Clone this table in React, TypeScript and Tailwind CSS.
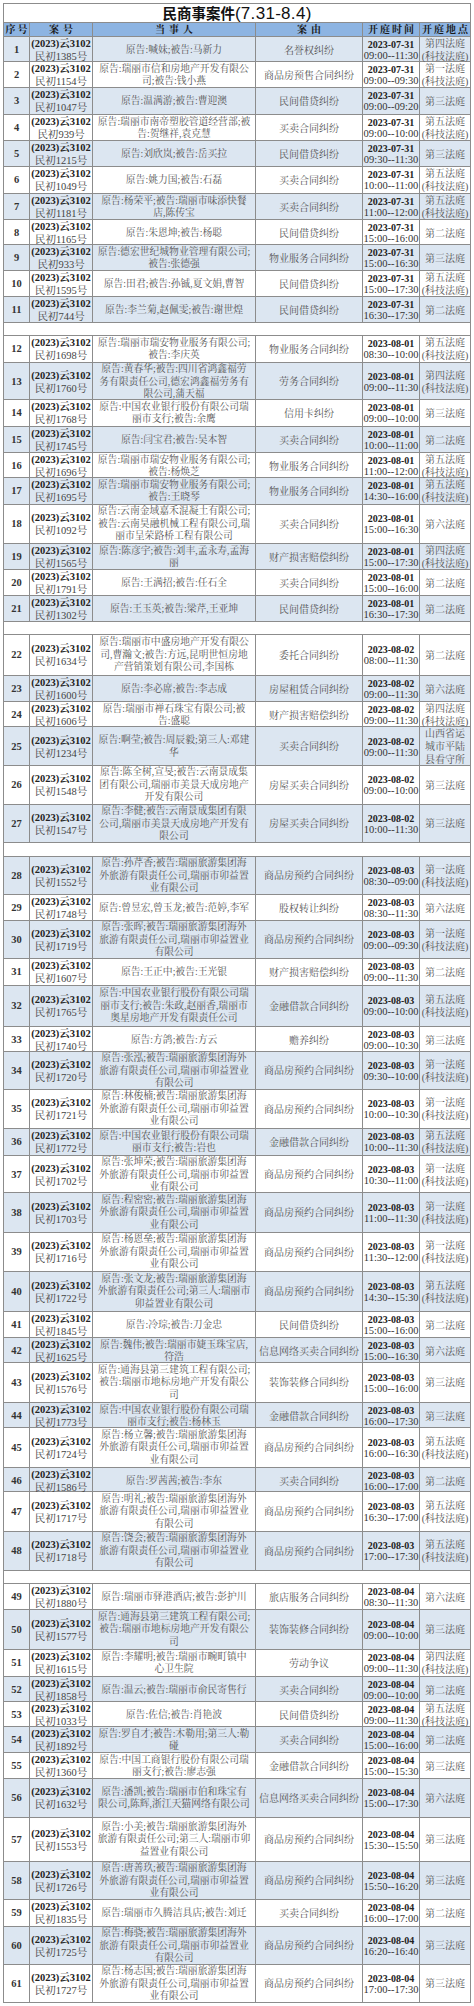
import React from "react";

type R = [number, string, string, string, string, string, number];

const P1K = "第一法庭~(科技法庭)";
const P4K = "第四法庭~(科技法庭)";
const P5K = "第五法庭~(科技法庭)";
const F1 = "原告:";
const LY = "被告:瑞丽旅游集团海";
const LY2 = "外旅游有限责任公司,瑞丽市卯益置~业有限公司";
const LZ = "被告:瑞丽旅游集团海外~旅游有限责任公司,瑞丽市卯益置业~有限公司";
const YP = "商品房预约合同纠纷";

const ROWH: Record<number, string> = {
  13: "h-[13px]",
  14: "h-[14px]",
  24: "h-[24px]",
  25: "h-[25px]",
  26: "h-[26px]",
  27: "h-[27px]",
  37: "h-[37px]",
  38: "h-[38px]",
  39: "h-[39px]",
  40: "h-[40px]",
  41: "h-[41px]",
  44: "h-[44px]",
};

const groups: { date: string; rows: R[]; sep: number }[] = [
  {
    date: "2023-07-31",
    sep: 13,
    rows: [
      [1, "1385", "原告:喊妹;被告:马新力", "名誉权纠纷", "09:00--11:30", P4K, 25],
      [2, "1154", "原告:瑞丽市信和房地产开发有限公~司;被告:钱小燕", "商品房预售合同纠纷", "09:00--09:30", P1K, 26],
      [3, "1047", "原告:温满游;被告:曹迎澳", "民间借贷纠纷", "09:00--09:20", "第三法庭", 27],
      [4, "939", "原告:瑞丽市南帝塑胶管道经营部;被~告:贺继祥,袁克慧", "买卖合同纠纷", "09:00--10:00", P5K, 26],
      [5, "1215", "原告:刘欣岚;被告:岳买拉", "民间借贷纠纷", "09:30--11:30", "第三法庭", 26],
      [6, "1049", "原告:姚力国;被告:石磊", "买卖合同纠纷", "10:00--11:00", P5K, 27],
      [7, "1181", "原告:杨荣平;被告:瑞丽市味添快餐~店,陈传宝", "买卖合同纠纷", "11:00--12:00", P5K, 26],
      [8, "1165", "原告:朱恩坤;被告:杨聪", "民间借贷纠纷", "15:00--16:00", "第二法庭", 25],
      [9, "933", "原告:德宏世纪城物业管理有限公司;~被告:张德强", "物业服务合同纠纷", "15:00--16:30", "第三法庭", 26],
      [10, "1595", "原告:田君;被告:孙铖,夏文娟,曹智", "民间借贷纠纷", "15:00--17:30", P5K, 26],
      [11, "744", "原告:李兰菊,赵佩雯;被告:谢世煌", "民间借贷纠纷", "16:30--17:30", "第二法庭", 26],
    ],
  },
  {
    date: "2023-08-01",
    sep: 13,
    rows: [
      [12, "1698", "原告:瑞丽市瑞安物业服务有限公司;~被告:李庆英", "物业服务合同纠纷", "08:30--10:00", P5K, 27],
      [13, "1760", "原告:黄春华;被告:四川省鸿鑫福劳~务有限责任公司,德宏鸿鑫福劳务有~限公司,蒲天福", "劳务合同纠纷", "09:00--11:30", P4K, 37],
      [14, "1768", "原告:中国农业银行股份有限公司瑞~丽市支行;被告:余鹰", "信用卡纠纷", "09:00--10:00", "第三法庭", 27],
      [15, "1745", "原告:闫宝君;被告:吴本智", "买卖合同纠纷", "10:00--11:00", "第二法庭", 26],
      [16, "1696", "原告:瑞丽市瑞安物业服务有限公司;~被告:杨焕芝", "物业服务合同纠纷", "11:00--12:00", P5K, 25],
      [17, "1695", "原告:瑞丽市瑞安物业服务有限公司;~被告:王晓琴", "物业服务合同纠纷", "14:30--16:00", P5K, 27],
      [18, "1092", "原告:云南金域嘉禾混凝土有限公司;~被告:云南昊融机械工程有限公司,瑞~丽市呈荣路桥工程有限公司", "买卖合同纠纷", "15:00--16:30", "第六法庭", 39],
      [19, "1565", "原告:陈彦宇;被告:刘丰,孟永寿,孟海~丽", "财产损害赔偿纠纷", "15:00--17:30", P4K, 26],
      [20, "1791", "原告:王满招;被告:任石全", "买卖合同纠纷", "15:00--16:00", "第二法庭", 26],
      [21, "1302", "原告:王玉英;被告:梁芹,王亚坤", "民间借贷纠纷", "16:30--17:30", "第二法庭", 26],
    ],
  },
  {
    date: "2023-08-02",
    sep: 14,
    rows: [
      [22, "1634", "原告:瑞丽市中盛房地产开发有限公~司,曹瀚文;被告:方远,昆明世恒房地~产营销策划有限公司,李国栋", "委托合同纠纷", "08:00--11:30", "第二法庭", 41],
      [23, "1600", "原告:李必席;被告:李志成", "房屋租赁合同纠纷", "09:00--11:30", "第六法庭", 26],
      [24, "1606", "原告:瑞丽市禅石珠宝有限公司;被~告:盛聪", "财产损害赔偿纠纷", "09:00--11:30", P4K, 25],
      [25, "1234", "原告:啊莹;被告:周辰毅;第三人:邓建~华", "买卖合同纠纷", "09:00--11:30", "山西省运~城市平陆~县看守所", 39],
      [26, "1548", "原告:陈全树,宣旻;被告:云南景成集~团有限公司,瑞丽市美景天成房地产~开发有限公司", "房屋买卖合同纠纷", "09:00--10:00", "第三法庭", 39],
      [27, "1547", "原告:李健;被告:云南景成集团有限~公司,瑞丽市美景天成房地产开发有~限公司", "房屋买卖合同纠纷", "10:00--11:30", "第三法庭", 38],
    ],
  },
  {
    date: "2023-08-03",
    sep: 13,
    rows: [
      [28, "1552", F1 + "孙芹香;" + LY + "~" + LY2, YP, "08:30--09:00", P1K, 38],
      [29, "1748", "原告:曾昱宏,曾玉龙;被告:范婷,李军", "股权转让纠纷", "08:30--11:30", "第六法庭", 26],
      [30, "1719", F1 + "张晖;" + LZ, YP, "09:00--09:30", P1K, 38],
      [31, "1607", "原告:王正中;被告:王光银", "财产损害赔偿纠纷", "09:00--11:30", "第二法庭", 27],
      [32, "1765", "原告:中国农业银行股份有限公司瑞~丽市支行;被告:朱政,赵丽香,瑞丽市~奥星房地产开发有限责任公司", "金融借款合同纠纷", "09:00--10:00", P5K, 41],
      [33, "1740", "原告:方鸽;被告:方云", "赡养纠纷", "09:00--10:30", "第三法庭", 25],
      [34, "1720", F1 + "张泓;" + LZ, YP, "09:30--10:00", P1K, 38],
      [35, "1721", F1 + "林俊楠;" + LY + "~" + LY2, YP, "10:00--10:30", P1K, 39],
      [36, "1772", "原告:中国农业银行股份有限公司瑞~丽市支行;被告:岩也", "金融借款合同纠纷", "10:00--11:30", P5K, 27],
      [37, "1702", F1 + "张坤荣;" + LY + "~" + LY2, YP, "10:30--11:00", P1K, 37],
      [38, "1703", F1 + "程密密;" + LY + "~" + LY2, YP, "11:00--11:30", P1K, 40],
      [39, "1716", F1 + "杨恩垒;" + LY + "~" + LY2, YP, "11:30--12:00", P1K, 39],
      [40, "1722", "原告:张文龙;被告:瑞丽旅游集团海~外旅游有限责任公司;第三人:瑞丽市~卯益置业有限公司", YP, "14:30--15:30", P5K, 40],
      [41, "1845", "原告:冷琮;被告:刀金忠", "民间借贷纠纷", "15:00--16:00", "第二法庭", 26],
      [42, "1625", "原告:魏伟;被告:瑞丽市婕玉珠宝店,~符浩", "信息网络买卖合同纠纷", "15:00--16:30", "第六法庭", 25],
      [43, "1576", "原告:通海县第三建筑工程有限公司;~被告:瑞丽市地标房地产开发有限公~司", "装饰装修合同纠纷", "15:00--16:00", "第三法庭", 40],
      [44, "1773", "原告:中国农业银行股份有限公司瑞~丽市支行;被告:杨林玉", "金融借款合同纠纷", "16:00--17:30", "第三法庭", 25],
      [45, "1724", F1 + "杨立馨;" + LY + "~" + LY2, YP, "16:00--16:30", P5K, 40],
      [46, "1586", "原告:罗茜茜;被告:李东", "买卖合同纠纷", "16:00--17:00", "第二法庭", 24],
      [47, "1717", F1 + "明礼;" + LZ, YP, "16:30--17:00", P5K, 40],
      [48, "1718", F1 + "饶会;" + LZ, YP, "17:00--17:30", P5K, 39],
    ],
  },
  {
    date: "2023-08-04",
    sep: 0,
    rows: [
      [49, "1880", "原告:瑞丽市驿港酒店;被告:彭护川", "旅店服务合同纠纷", "08:30--11:30", "第六法庭", 26],
      [50, "1577", "原告:通海县第三建筑工程有限公司;~被告:瑞丽市地标房地产开发有限公~司", "装饰装修合同纠纷", "09:00--10:00", "第三法庭", 40],
      [51, "1615", "原告:李耀明;被告:瑞丽市畹町镇中~心卫生院", "劳动争议", "09:00--11:30", P4K, 27],
      [52, "1858", "原告:温云;被告:瑞丽市俞民寄售行", "买卖合同纠纷", "09:00--10:00", "第二法庭", 25],
      [53, "1033", "原告:佐信;被告:肖艳波", "民间借贷纠纷", "09:00--11:30", P5K, 25],
      [54, "1892", "原告:罗自才;被告:木勒用;第三人:勒~碰", "买卖合同纠纷", "15:00--16:00", "第二法庭", 26],
      [55, "1360", "原告:中国工商银行股份有限公司瑞~丽支行;被告:廖志强", "金融借款合同纠纷", "15:00--15:30", "第三法庭", 26],
      [56, "1632", "原告:潘凯;被告:瑞丽市伯和珠宝有~限公司,陈辉,浙江天猫网络有限公司", "信息网络买卖合同纠纷", "15:00--17:30", "第六法庭", 39],
      [57, "1553", "原告:小美;被告:瑞丽旅游集团海外~旅游有限责任公司;第三人:瑞丽市卯~益置业有限公司", YP, "15:30--15:50", "第三法庭", 44],
      [58, "1726", F1 + "唐善玖;" + LY + "~" + LY2, YP, "15:50--16:20", "第三法庭", 38],
      [59, "1835", "原告:瑞丽市久腾洁具店;被告:刘迁", "买卖合同纠纷", "16:00--17:00", "第二法庭", 27],
      [60, "1725", F1 + "梅骁;" + LZ, YP, "16:20--16:40", "第三法庭", 38],
      [61, "1727", F1 + "杨志国;" + LY + "~" + LY2, YP, "17:00--17:30", "第三法庭", 38],
    ],
  },
];

const GRID = "grid grid-cols-[26px_63px_163px_107px_57px_50px]";
const CELL = "flex flex-col items-center justify-center text-center border-r border-[#8c8c8c] overflow-visible";

function Row({ r, date }: { r: R; date: string }) {
  const [seq, num, parties, cause, time, place, h] = r;
  const blue = seq <= 27 ? seq % 2 === 1 : seq % 2 === 0;
  return (
    <div className={`${GRID} ${ROWH[h]} border-b border-[#8c8c8c] ${blue ? "bg-[#dce6f1]" : "bg-white"}`}>
      <div className={`${CELL} text-[10.5px] font-bold text-[#333]`}>{seq}</div>
      <div className={`${CELL} leading-[13px] text-[10.5px] whitespace-nowrap`}>
        <span className="font-bold text-[#222]">(2023)云3102</span>
        <span className="text-[#444]">民初{num}号</span>
      </div>
      <div className={`${CELL} leading-[12.5px] text-[9.8px] text-[#555] whitespace-nowrap`}>
        {parties.split("~").map((l, i) => (
          <span key={i}>{l}</span>
        ))}
      </div>
      <div className={`${CELL} text-[10px] text-[#555] whitespace-nowrap`}>{cause}</div>
      <div className={`${CELL} leading-[11px] whitespace-nowrap`}>
        <span className="text-[10px] font-bold text-[#222]">{date}</span>
        <span className="text-[10.5px] text-[#333]">{time}</span>
      </div>
      <div className="flex flex-col items-center justify-center text-center leading-[13px] text-[10px] text-[#555] whitespace-nowrap">
        {place.split("~").map((l, i) => (
          <span key={i}>{l}</span>
        ))}
      </div>
    </div>
  );
}

export default function App() {
  return (
    <div className="w-[474px] min-h-[2006px] bg-white pt-[3px] pl-[3px] font-['Liberation_Serif','Noto_Serif_CJK_SC','Noto_Sans_CJK_SC',serif]">
      <div className="w-[468px] border-l border-r border-t border-[#8c8c8c]">
        <div className="h-[19px] border-b border-[#8c8c8c] flex items-center justify-center text-[#111]">
          <span className="text-[14.5px] font-bold font-['Noto_Sans_CJK_SC',sans-serif] leading-none">民商事案件</span>
          <span className="text-[17px] font-['Liberation_Sans',sans-serif] leading-none tracking-[0.3px]">(7.31-8.4)</span>
        </div>
        <div className={`${GRID} h-[14px] bg-[#8db4e2] border-b border-[#8c8c8c] text-[10px] font-bold text-[#1a1a1a] leading-none whitespace-nowrap`}>
          <div className={`${CELL} tracking-[2px] pl-[2px]`}>序号</div>
          <div className={`${CELL} tracking-[4px] pl-[4px]`}>案号</div>
          <div className={`${CELL} tracking-[4px] pl-[4px]`}>当事人</div>
          <div className={`${CELL} tracking-[4px] pl-[4px]`}>案由</div>
          <div className={`${CELL} tracking-[2px] pl-[2px]`}>开庭时间</div>
          <div className="flex items-center justify-center tracking-[2px] pl-[2px]">开庭地点</div>
        </div>
        {groups.map((g, gi) => (
          <React.Fragment key={gi}>
            {g.rows.map((r) => (
              <Row key={r[0]} r={r} date={g.date} />
            ))}
            {g.sep > 0 && <div className={`${ROWH[g.sep]} bg-white border-b border-[#8c8c8c]`} />}
          </React.Fragment>
        ))}
      </div>
    </div>
  );
}
